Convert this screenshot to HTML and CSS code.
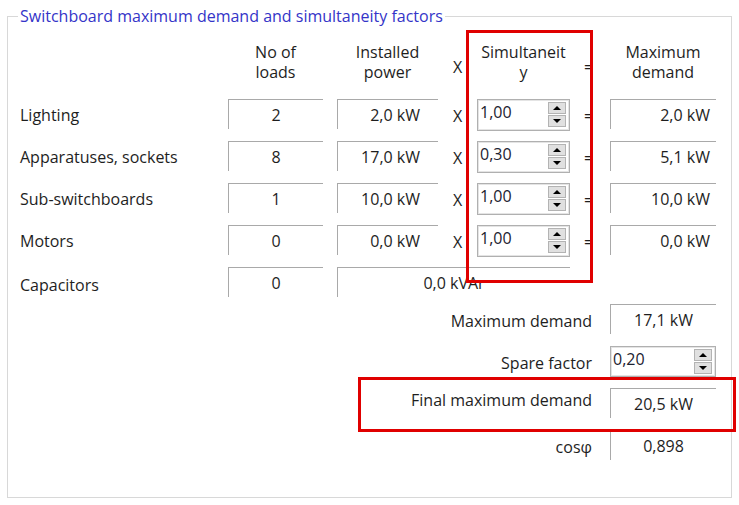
FILE: index.html
```html
<!DOCTYPE html>
<html lang="en">
<head>
<meta charset="utf-8">
<title>Switchboard maximum demand</title>
<link rel="stylesheet" href="styles.css">
</head>
<body>
<div class="page">
  <fieldset class="group">
    <legend>Switchboard maximum demand and simultaneity factors</legend>
    <div class="table">
      <div class="hd c-loads">No of<br>loads</div>
      <div class="hd c-power">Installed<br>power</div>
      <div class="hd hd-op c-x">X</div>
      <div class="hd c-sim">Simultaneit<br>y</div>
      <div class="hd hd-op c-eq">=</div>
      <div class="hd c-max">Maximum<br>demand</div>

      <div class="lbl">Lighting</div>
      <div class="box num c-loads">2</div>
      <div class="box kw c-power">2,0 kW</div>
      <div class="op c-x">X</div>
      <div class="spin c-sim"><span class="val">1,00</span><span class="btns"><span class="btn up"></span><span class="btn down"></span></span></div>
      <div class="op c-eq">=</div>
      <div class="box kwm c-max">2,0 kW</div>

      <div class="lbl">Apparatuses, sockets</div>
      <div class="box num c-loads">8</div>
      <div class="box kw c-power">17,0 kW</div>
      <div class="op c-x">X</div>
      <div class="spin c-sim"><span class="val">0,30</span><span class="btns"><span class="btn up"></span><span class="btn down"></span></span></div>
      <div class="op c-eq">=</div>
      <div class="box kwm c-max">5,1 kW</div>

      <div class="lbl">Sub-switchboards</div>
      <div class="box num c-loads">1</div>
      <div class="box kw c-power">10,0 kW</div>
      <div class="op c-x">X</div>
      <div class="spin c-sim"><span class="val">1,00</span><span class="btns"><span class="btn up"></span><span class="btn down"></span></span></div>
      <div class="op c-eq">=</div>
      <div class="box kwm c-max">10,0 kW</div>

      <div class="lbl">Motors</div>
      <div class="box num c-loads">0</div>
      <div class="box kw c-power">0,0 kW</div>
      <div class="op c-x">X</div>
      <div class="spin c-sim"><span class="val">1,00</span><span class="btns"><span class="btn up"></span><span class="btn down"></span></span></div>
      <div class="op c-eq">=</div>
      <div class="box kwm c-max">0,0 kW</div>

      <div class="lbl lbl-cap">Capacitors</div>
      <div class="box num c-loads">0</div>
      <div class="box num c-cap">0,0 kVAr</div>
    </div>

    <div class="summary">
      <div class="slbl">Maximum demand</div>
      <div class="box num">17,1 kW</div>
      <div class="slbl">Spare factor</div>
      <div class="spin spin-wide"><span class="val">0,20</span><span class="btns"><span class="btn up"></span><span class="btn down"></span></span></div>
      <div class="slbl slbl-final">Final maximum demand</div>
      <div class="box num">20,5 kW</div>
      <div class="slbl">cosφ</div>
      <div class="box num">0,898</div>
    </div>
  </fieldset>
  <div class="mark mark-sim"></div>
  <div class="mark mark-final"></div>
</div>
</body>
</html>
```

FILE: styles.css
```css
* { box-sizing: border-box; }

body {
  margin: 0;
  width: 739px;
  height: 505px;
  overflow: hidden;
  background: #ffffff;
  font-family: "Open Sans", "Noto Sans", "DejaVu Sans", sans-serif;
  font-size: 16px;
  color: #1e1e1e;
}

.page {
  position: relative;
  height: 505px;
  padding: 6px 0 0 7px;
}

.group {
  margin: 0;
  padding: 0 0 0 12px;
  width: 725px;
  height: 492px;
  min-inline-size: 0;
  border: 1px solid #d8d8d8;
}

.group legend {
  margin-left: -2px;
  padding: 0 2px;
  line-height: 20px;
  color: #3434c8;
}

.table {
  display: grid;
  grid-template-columns: 208px 95px 14px 101px 39px 93px 40px 106px;
  grid-template-rows: auto;
  grid-auto-rows: 30px;
  row-gap: 12px;
  align-items: start;
  padding-top: 16px;
}

.c-loads { grid-column: 2; }
.c-power { grid-column: 4; }
.c-x { grid-column: 5; }
.c-sim { grid-column: 6; }
.c-eq { grid-column: 7; }
.c-max { grid-column: 8; }
.c-cap { grid-column: 4 / 7; }

.hd {
  text-align: center;
  line-height: 20px;
  margin-bottom: 5px;
}

.hd-op {
  padding-top: 15px;
}

.lbl {
  grid-column: 1;
  line-height: 30px;
  padding-top: 1px;
}

.lbl-cap { padding-top: 3px; }

.box {
  height: 30px;
  border-top: 1px solid #a9a9a9;
  border-left: 1px solid #a9a9a9;
  line-height: 30px;
  white-space: nowrap;
}

.num { text-align: center; }
.kw { text-align: right; padding-right: 18px; }
.kwm { text-align: right; padding-right: 6px; }

.op {
  text-align: center;
  line-height: 30px;
  padding-top: 2px;
}

.c-eq.op, .c-eq.hd { padding-right: 3px; }

.spin {
  height: 32px;
  display: flex;
  align-items: flex-start;
  border: 1px solid #b0b0b0;
  box-shadow: inset 0 0 0 1px #e4e4e4;
  padding: 1px 3px 0 2px;
}

.val {
  flex: 1;
  line-height: 23px;
  color: #1c2230;
}

.btns {
  display: flex;
  flex-direction: column;
  gap: 1px;
  padding-top: 1px;
}

.btn {
  width: 18px;
  height: 12px;
  background: #e0e0e0;
  border: 1px solid #b3b3b3;
  display: flex;
  align-items: center;
  justify-content: center;
}

.btn::before {
  content: "";
  width: 0;
  height: 0;
  border-left: 4px solid transparent;
  border-right: 4px solid transparent;
}

.up::before { border-bottom: 4px solid #000; }
.down::before { border-top: 4px solid #000; }

.summary {
  display: grid;
  grid-template-columns: 572px 106px;
  grid-auto-rows: 30px;
  column-gap: 18px;
  row-gap: 12px;
  align-items: start;
  margin-top: 7px;
}

.slbl {
  text-align: right;
  line-height: 30px;
  padding-top: 2px;
}

.slbl-final {
  padding-top: 0;
  margin-top: -3px;
}

.spin-wide {
  height: 31px;
}

.mark {
  position: absolute;
  border: 3px solid #e00000;
}

.mark-sim {
  left: 466px;
  top: 30px;
  width: 127px;
  height: 253px;
}

.mark-final {
  left: 358px;
  top: 377px;
  width: 378px;
  height: 55px;
}
```
